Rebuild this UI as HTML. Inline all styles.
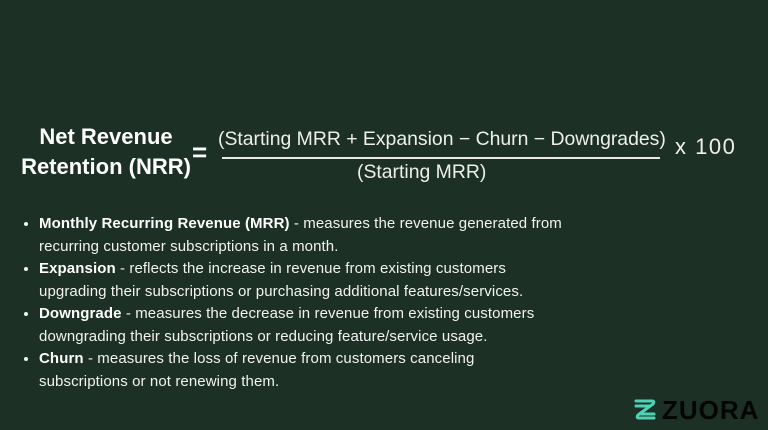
<!DOCTYPE html>
<html><head><style>
body{margin:0;width:768px;height:430px;background:#1c3026;overflow:hidden;position:relative;font-family:"Liberation Sans",sans-serif;color:#fff}
.a{position:absolute;white-space:nowrap}
.t{font-weight:bold;font-size:22px;text-align:center;width:220px;left:-4px;line-height:30px;top:122px}
ul{position:absolute;left:22px;top:213px;margin:0;padding:0 0 0 17px;font-size:15px;line-height:22.5px;color:#f2f2f2;letter-spacing:0.1px}
li{margin:0;padding:0}
b{font-weight:bold;color:#fff}
</style></head><body>
<div class="a t">Net Revenue<br>Retention (NRR)</div>
<div class="a" style="left:192px;top:137px;font-size:26px;font-weight:bold">=</div>
<div class="a" style="left:218px;top:128px;font-size:19.4px;color:#eee">(Starting MRR + Expansion − Churn − Downgrades)</div>
<div class="a" style="left:222px;top:157px;width:438px;height:2px;background:#e8e8e8"></div>
<div class="a" style="left:357px;top:161px;font-size:19.4px;color:#eee">(Starting MRR)</div>
<div class="a" style="left:675px;top:134px;font-size:22px;color:#eee;letter-spacing:1.5px">x 100</div>
<ul>
<li><b>Monthly Recurring Revenue (MRR)</b> - measures the revenue generated from<br>recurring customer subscriptions in a month.</li>
<li><b>Expansion</b> - reflects the increase in revenue from existing customers<br>upgrading their subscriptions or purchasing additional features/services.</li>
<li><b>Downgrade</b> - measures the decrease in revenue from existing customers<br>downgrading their subscriptions or reducing feature/service usage.</li>
<li><b>Churn</b> - measures the loss of revenue from customers canceling<br>subscriptions or not renewing them.</li>
</ul>
<svg class="a" style="left:632px;top:397px" width="26" height="26" viewBox="0 0 26 26"><path d="M4 4H20Q23 4 21 7L6 18Q4 21 7 21H22M4 9H17M9 17H22" fill="none" stroke="#4fd1b4" stroke-width="3" stroke-linecap="round" stroke-linejoin="round"/></svg>
<div class="a" style="left:662px;top:395px;font-size:26px;font-weight:900;color:#050505;letter-spacing:1px">ZUORA</div>
</body></html>
